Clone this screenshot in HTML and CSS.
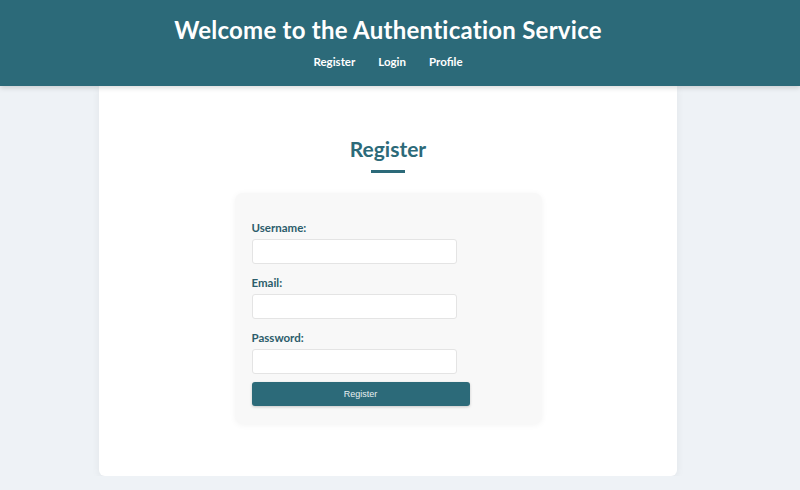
FILE: index.html
```html
<!DOCTYPE html>
<html lang="en">
  <head>
    <meta charset="UTF-8" />
    <meta name="viewport" content="width=device-width, initial-scale=1.0" />
    <title>Authentication Service</title>
    <link rel="stylesheet" href="styles.css">
  </head>
  <body>
    <header class="header">
      <div class="header-inner">
        <h1>Welcome to the Authentication Service</h1>
        <nav class="nav">
          <a href="#">Register</a>
          <a href="#">Login</a>
          <a href="#">Profile</a>
        </nav>
      </div>
    </header>

    <main class="page">
      <section class="card">
        <h2 class="card-title">Register</h2>
        <div class="title-bar"></div>

        <form class="form">
          <label for="username">Username:</label>
          <input type="text" id="username" />

          <label for="email">Email:</label>
          <input type="email" id="email" />

          <label for="password">Password:</label>
          <input type="password" id="password" />

          <button type="button" class="btn">Register</button>
        </form>
      </section>
    </main>
  </body>
</html>
```

FILE: styles.css
```css
* {
  box-sizing: border-box;
}

body {
  margin: 0;
  background-color: #eef2f6;
  font-family: Lato, "Noto Sans", sans-serif;
}

.header {
  background-color: #2c6a79;
  color: #fff;
  height: 86px;
  box-shadow: 0 2px 5px rgba(0, 0, 0, 0.15);
  position: relative;
}

.header-inner {
  width: 776px;
  text-align: center;
  padding-top: 15px;
}

.header h1 {
  margin: 0;
  font-size: 24px;
  font-weight: 700;
  letter-spacing: 0.25px;
}

.nav {
  display: flex;
  justify-content: center;
  gap: 23px;
  margin-top: 11px;
}

.nav a {
  color: #fff;
  text-decoration: none;
  font-size: 11.5px;
  font-weight: 700;
}

.page {
  width: 776px;
  display: flex;
  justify-content: center;
}

.card {
  width: 578px;
  height: 390px;
  background-color: #fff;
  border-radius: 0 0 6px 6px;
  box-shadow: 0 2px 8px rgba(0, 0, 0, 0.06);
  display: flex;
  flex-direction: column;
  align-items: center;
  padding-top: 50px;
}

.card-title {
  margin: 0;
  color: #2c6a79;
  font-size: 21px;
  font-weight: 700;
}

.title-bar {
  width: 34px;
  height: 3px;
  background-color: #2c6a79;
  margin-top: 9px;
}

.form {
  width: 307px;
  margin-top: 20px;
  background-color: #f8f8f8;
  border-radius: 8px;
  box-shadow: 0 1px 6px rgba(0, 0, 0, 0.05);
  padding: 28px 17px 18px;
  display: flex;
  flex-direction: column;
  align-items: flex-start;
}

.form label {
  color: #2c5d6b;
  font-size: 11.5px;
  font-weight: 700;
  margin-bottom: 5px;
}

.form input {
  width: 205px;
  height: 25px;
  border: 1px solid #e4e4e4;
  border-radius: 3px;
  background-color: #fff;
  margin-bottom: 12px;
}

.form input:last-of-type {
  margin-bottom: 8px;
}

.btn {
  width: 218px;
  height: 24px;
  background-color: #2c6a79;
  color: #e8f0f2;
  font-family: "Liberation Sans", Arial, sans-serif;
  font-size: 9px;
  border: none;
  border-radius: 3px;
  box-shadow: 0 1px 3px rgba(0, 0, 0, 0.2);
  cursor: pointer;
}
```
